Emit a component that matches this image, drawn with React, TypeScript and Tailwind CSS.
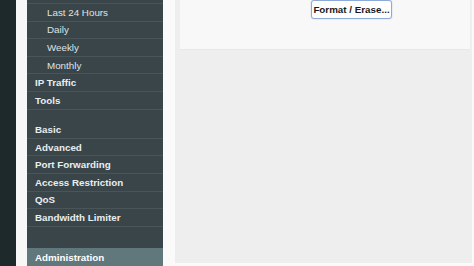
const subItems = ["Last 24 Hours", "Daily", "Weekly", "Monthly"];
const topItems = ["IP Traffic", "Tools"];
const mainItems = [
  "Basic",
  "Advanced",
  "Port Forwarding",
  "Access Restriction",
  "QoS",
  "Bandwidth Limiter",
];

function Row({ label, sub }: { label: string; sub?: boolean }) {
  return (
    <div
      className={`h-[17.6px] shrink-0 flex items-center pt-[1px] border-b border-[#4a555a] ${
        sub ? "pl-[20px] font-normal text-[#dde3e5]" : "pl-[8px] font-bold text-[#e9eef0]"
      }`}
    >
      {label}
    </div>
  );
}

export default function App() {
  return (
    <div
      className="w-[474px] h-[266px] flex bg-[#fafafa] overflow-hidden text-[9.8px] leading-none"
      style={{ fontFamily: '"Liberation Sans", Arial, sans-serif' }}
    >
      <div className="w-[16px] shrink-0 bg-[#1d292b]" />
      <div className="w-[11px] shrink-0 bg-[#f7f7f7]" />

      <nav className="w-[136px] shrink-0 flex flex-col bg-[#3a454a]">
        <div className="h-[4px] shrink-0 border-b border-[#4a555a]" />
        {subItems.map((s) => (
          <Row key={s} label={s} sub />
        ))}
        {topItems.map((s) => (
          <Row key={s} label={s} />
        ))}
        <div className="h-[11.6px] shrink-0" />
        {mainItems.map((s) => (
          <Row key={s} label={s} />
        ))}
        <div className="h-[21.2px] shrink-0" />
        <div className="flex-1 flex items-center pt-[1px] pl-[8px] font-bold text-white bg-[#60777b]">
          Administration
        </div>
      </nav>

      <div className="w-[12px] shrink-0 bg-[#fafafa]" />

      <main className="w-[297px] shrink-0 h-[263px] bg-[#eeeeee] pl-[5px] pr-[2px]">
        <div className="h-[50px] bg-[#f8f8f8] border-b border-[#e8e8e8]">
          <div className="ml-[131px] w-[81px] h-[19px] pt-[1px] rounded-[3px] border-[1.5px] border-[#8eaad9] bg-white shadow-[0_0_1.5px_#a9c0e6] flex items-center justify-center font-bold text-[#1a1a1a]">
            Format / Erase...
          </div>
        </div>
      </main>
    </div>
  );
}
